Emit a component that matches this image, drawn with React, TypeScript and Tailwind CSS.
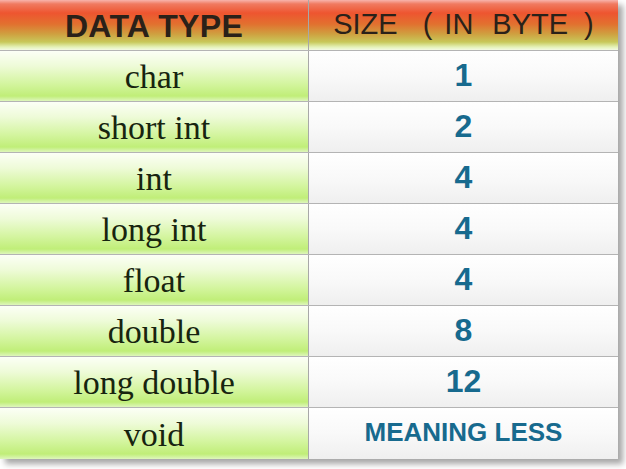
const rows: { type: string; size: string; small?: boolean }[] = [
  { type: "char", size: "1" },
  { type: "short int", size: "2" },
  { type: "int", size: "4" },
  { type: "long int", size: "4" },
  { type: "float", size: "4" },
  { type: "double", size: "8" },
  { type: "long double", size: "12" },
  { type: "void", size: "MEANING LESS", small: true },
];

export default function App() {
  return (
    <div className="w-[626px] h-[469px] bg-white">
      <div className="w-[618px] shadow-[5px_5px_6px_rgba(0,0,0,0.35)] font-['Liberation_Sans',Arial,sans-serif]">
        {/* header */}
        <div className="grid grid-cols-[309px_309px] h-[51px] bg-[linear-gradient(to_bottom,#f8b4ac_0%,#f07a60_8%,#ee5530_26%,#e2702f_48%,#cfa040_68%,#c8c85a_84%,#e4f2b8_94%,#f4fae4_100%)] border-b border-[#b4b4b4]">
          <div className="flex items-center justify-center border-r border-[#a8a8a8] text-[32px] font-bold text-[#2a2119] leading-none pt-[2px] tracking-[0.3px]">
            DATA TYPE
          </div>
          <div className="flex items-center justify-center text-[29px] text-[#2a2119] leading-none pb-[2px]">
            <span>SIZE</span>
            <span className="ml-[25px]">(</span>
            <span className="ml-[12px]">IN</span>
            <span className="ml-[19px]">BYTE</span>
            <span className="ml-[16px]">)</span>
          </div>
        </div>

        {rows.map((r, i) => (
          <div
            key={i}
            className="grid grid-cols-[309px_309px] h-[51px] border-b border-[#b4b4b4] last:border-b-0"
          >
            <div className="flex items-center justify-center border-r border-[#a8a8a8] bg-[linear-gradient(to_bottom,#fcfff6_0%,#eefbd8_30%,#d4f5a0_65%,#c0ee78_90%,#def6bc_100%)] font-['Liberation_Serif','Times_New_Roman',serif] text-[34px] text-[#17240f] leading-none pt-[2px]">
              {r.type}
            </div>
            <div
              className={
                r.small
                  ? "flex items-center justify-center bg-[linear-gradient(to_bottom,#ffffff_0%,#f9f9f9_50%,#efefef_100%)] text-[26px] font-bold text-[#176a8e] leading-none pb-[4px]"
                  : "flex items-center justify-center bg-[linear-gradient(to_bottom,#ffffff_0%,#f9f9f9_50%,#efefef_100%)] text-[32px] font-bold text-[#176a8e] leading-none pb-[2px]"
              }
            >
              {r.size}
            </div>
          </div>
        ))}
      </div>
    </div>
  );
}
